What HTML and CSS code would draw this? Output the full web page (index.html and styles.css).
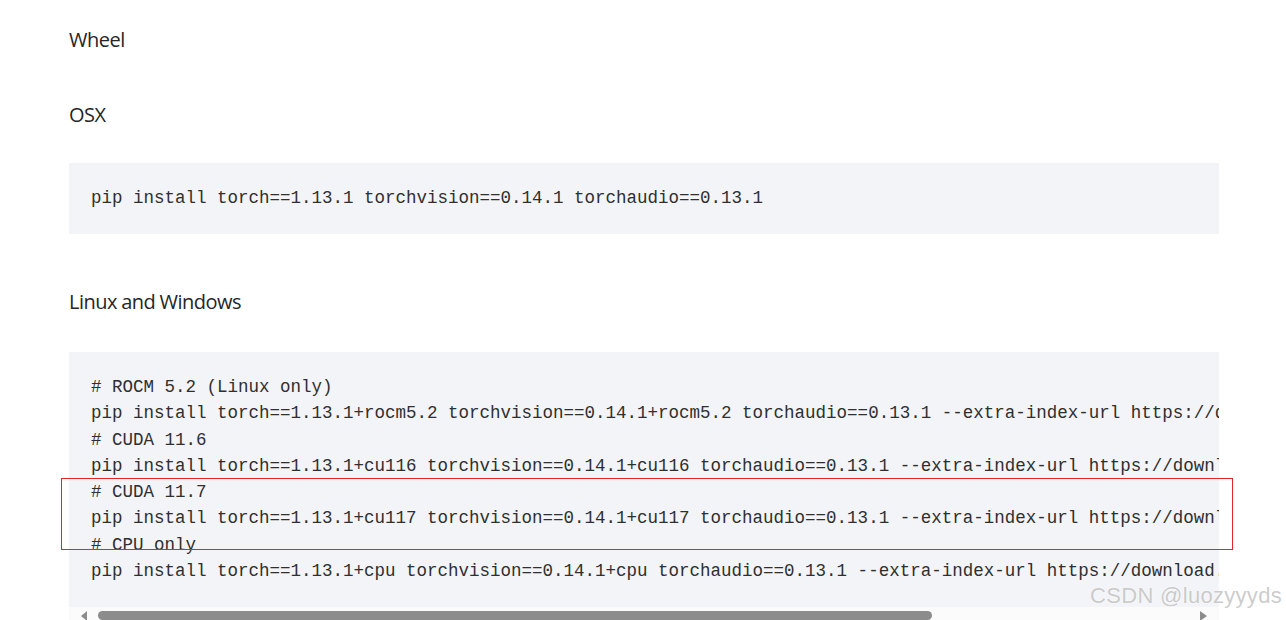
FILE: index.html
```html
<!DOCTYPE html>
<html lang="en">
<head>
<meta charset="utf-8">
<title>Wheel</title>
<link rel="stylesheet" href="styles.css">
</head>
<body>
<main class="doc">
  <h3 class="heading heading-first">Wheel</h3>
  <h4 class="heading heading-osx">OSX</h4>
  <div class="code code-osx"><pre>pip install torch==1.13.1 torchvision==0.14.1 torchaudio==0.13.1</pre></div>
  <h4 class="heading heading-linux">Linux and Windows</h4>
  <div class="code-wrap">
    <div class="code code-linux"><pre># ROCM 5.2 (Linux only)
pip install torch==1.13.1+rocm5.2 torchvision==0.14.1+rocm5.2 torchaudio==0.13.1 --extra-index-url https://download.pytorch.org/whl/rocm5.2
# CUDA 11.6
pip install torch==1.13.1+cu116 torchvision==0.14.1+cu116 torchaudio==0.13.1 --extra-index-url https://download.pytorch.org/whl/cu116
# CUDA 11.7
pip install torch==1.13.1+cu117 torchvision==0.14.1+cu117 torchaudio==0.13.1 --extra-index-url https://download.pytorch.org/whl/cu117
# CPU only
pip install torch==1.13.1+cpu torchvision==0.14.1+cpu torchaudio==0.13.1 --extra-index-url https://download.pytorch.org/whl/cpu</pre></div>
    <div class="scrollbar">
      <span class="arrow arrow-left"></span>
      <span class="thumb"></span>
      <span class="arrow arrow-right"></span>
    </div>
    <div class="highlight"></div>
  </div>
</main>
<div class="watermark">CSDN @luozyyyds</div>
</body>
</html>
```
FILE: styles.css
```css
html, body {
  margin: 0;
  padding: 0;
  background: #ffffff;
  overflow: hidden;
}
body {
  width: 1286px;
  height: 620px;
  position: relative;
  font-family: "Open Sans", "Noto Sans", sans-serif;
  color: #262626;
}
.doc {
  padding-left: 69px;
  width: 1150px;
}
.heading {
  margin: 0;
  font-weight: 400;
  font-size: 20px;
  line-height: 28px;
  letter-spacing: -0.5px;
  word-spacing: -0.5px;
  color: #262626;
}
.heading-first { padding-top: 26px; }
.heading-osx { margin-top: 47px; }
.heading-linux { margin-top: 54px; }
.code {
  background: #f3f4f7;
  overflow: hidden;
}
.code pre {
  margin: 0;
  font-family: "Liberation Mono", monospace;
  font-size: 17.5px;
  line-height: 26.3px;
  color: #2f2f2f;
  white-space: pre;
}
.code-osx {
  margin-top: 34px;
  padding: 22px 22px 22px 22px;
  height: 27px;
}
.code-wrap {
  position: relative;
  margin-top: 36px;
}
.code-linux {
  padding: 22px 0 23px 22px;
  height: 210px;
}
.scrollbar {
  height: 17px;
  background: #fbfbfb;
  position: relative;
}
.thumb {
  position: absolute;
  left: 29px;
  width: 834px;
  top: 4px;
  height: 9px;
  border-radius: 5px;
  background: #8c8c8c;
}
.arrow {
  position: absolute;
  top: 4px;
  width: 0;
  height: 0;
  border-top: 5px solid transparent;
  border-bottom: 5px solid transparent;
}
.arrow-left {
  left: 12px;
  border-right: 6px solid #8c8c8c;
}
.arrow-right {
  right: 12px;
  border-left: 7px solid #8c8c8c;
}
.highlight {
  position: absolute;
  left: -8px;
  top: 126px;
  width: 1170px;
  height: 70px;
  border: 1px solid #e1262b;
}
.watermark {
  position: absolute;
  right: 4px;
  top: 583px;
  font-family: "Liberation Sans", Arial, sans-serif;
  font-size: 22px;
  color: rgba(170, 170, 170, 0.6);
  text-shadow: 0 0 2px rgba(255,255,255,0.9);
  letter-spacing: 0.3px;
}
```
